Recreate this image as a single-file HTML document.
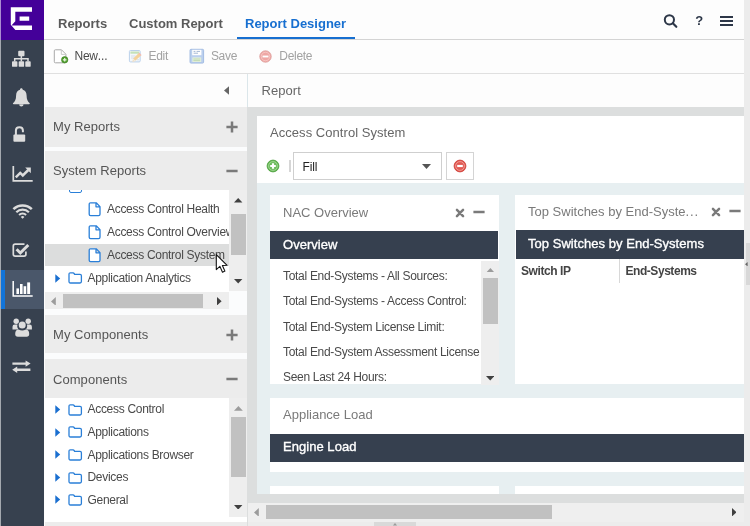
<!DOCTYPE html>
<html><head><meta charset="utf-8"><title>Report Designer</title>
<style>
html,body{margin:0;padding:0;}
body{width:750px;height:526px;position:relative;overflow:hidden;background:#fdfdfd;font-family:"Liberation Sans",sans-serif;font-size:12px;color:#444;}
div,span,svg{position:absolute;box-sizing:border-box;}
.t{white-space:nowrap;line-height:20px;height:20px;}
.h13{font-size:13px;color:#555;letter-spacing:0.05px;}
.tab{font-size:13px;font-weight:bold;color:#5a5a5a;}
.s12{font-size:12px;letter-spacing:-0.3px;color:#4a4a4a;}
.dis{color:#a2a2a2;}
.hdr{left:45px;width:202.4px;background:#ececec;}
.dark{background:#36404f;}
.wh{font-size:13px;color:#fff;-webkit-text-stroke:0.35px #fff;letter-spacing:0.04px;}
.wt{font-size:13px;color:#7a7a7a;}
.sbt{background:#eeeeee;}
.sbh{background:#c1c1c1;}
</style></head><body>
<div id="root" style="left:0;top:0;width:750px;height:526px;will-change:transform;">

<div style="left:0;top:0;width:44px;height:526px;background:#37414f;"></div>
<div style="left:0;top:0;width:44px;height:39.6px;background:#440099;"></div>
<div style="left:1px;top:269.6px;width:43px;height:39.3px;background:#4a576a;border-left:4px solid #1274d8;"></div>
<div style="left:44px;top:39px;width:700px;height:1px;background:#d4d4d4;"></div>
<div class="t tab" style="left:58px;top:14px;">Reports</div>
<div class="t tab" style="left:129px;top:14px;">Custom Report</div>
<div class="t tab" style="left:245px;top:14px;color:#176fd0;">Report Designer</div>
<div style="left:237.3px;top:36.8px;width:117.7px;height:2.4px;background:#176fd0;"></div>
<div style="left:44px;top:72.6px;width:700px;height:1px;background:#e0e0e0;"></div>
<div class="t s12" style="left:74.6px;top:46px;">New<i style="font-style:normal;letter-spacing:0px;">...</i></div>
<div class="t s12 dis" style="left:148.5px;top:46px;">Edit</div>
<div class="t s12 dis" style="left:210.9px;top:46px;">Save</div>
<div class="t s12 dis" style="left:279.3px;top:46px;">Delete</div>
<div style="left:45px;top:107px;width:202px;height:419px;background:#fbfcfd;"></div>
<div class="hdr" style="top:107px;height:40px;"></div>
<div class="t h13" style="left:53px;top:117px;">My Reports</div>
<div class="hdr" style="top:151.3px;height:38.7px;"></div>
<div class="t h13" style="left:53px;top:161px;">System Reports</div>
<div class="hdr" style="top:315px;height:38px;"></div>
<div class="t h13" style="left:53px;top:325px;">My Components</div>
<div class="hdr" style="top:359px;height:39px;"></div>
<div class="t h13" style="left:53px;top:370px;">Components</div>
<svg style="left:225.2px;top:120px;" width="14" height="14" viewBox="-7 -7 14 14"><path d="M-5.6 0 H5.6 M0 -5.6 V5.6" stroke="#7a7a7a" stroke-width="2.5"/></svg>
<svg style="left:225.2px;top:163.8px;" width="14" height="14" viewBox="-7 -7 14 14"><path d="M-5.6 0 H5.6" stroke="#7a7a7a" stroke-width="2.5"/></svg>
<svg style="left:225.2px;top:327.6px;" width="14" height="14" viewBox="-7 -7 14 14"><path d="M-5.6 0 H5.6 M0 -5.6 V5.6" stroke="#7a7a7a" stroke-width="2.5"/></svg>
<svg style="left:225.2px;top:371.8px;" width="14" height="14" viewBox="-7 -7 14 14"><path d="M-5.6 0 H5.6" stroke="#7a7a7a" stroke-width="2.5"/></svg>
<svg style="left:224.20000000000002px;top:86.1px;" width="5.2" height="9" viewBox="0 0 5.2 9"><path d="M5.2 0 L0 4.5 L5.2 9 Z" fill="#666"/></svg>
<div style="left:45px;top:190px;width:184.3px;height:102.3px;overflow:hidden;background:#fff;">
<div style="left:23.700000000000003px;top:-8.6px;width:13.4px;height:11.3px;border:1.4px solid #2a7fd8;border-radius:2px;"></div>
<div style="left:0;top:53.599999999999994px;width:184.3px;height:22.8px;background:#dcdddd;"></div>
<svg style="left:43.0px;top:12.200000000000017px;" width="14" height="15" viewBox="0 0 14 15"><path d="M1.2 2.2 Q1.2 0.8 2.6 0.8 L8.2 0.8 L12 4.6 L12 12.2 Q12 13.6 10.6 13.6 L2.6 13.6 Q1.2 13.6 1.2 12.2 Z M8 0.9 L8 4.8 L11.9 4.8" fill="#fff" stroke="#2a7fd8" stroke-width="1.3" stroke-linejoin="round"/></svg>
<div class="t s12" style="left:62px;top:9.200000000000012px;">Access Control Health</div>
<svg style="left:43.0px;top:35.30000000000001px;" width="14" height="15" viewBox="0 0 14 15"><path d="M1.2 2.2 Q1.2 0.8 2.6 0.8 L8.2 0.8 L12 4.6 L12 12.2 Q12 13.6 10.6 13.6 L2.6 13.6 Q1.2 13.6 1.2 12.2 Z M8 0.9 L8 4.8 L11.9 4.8" fill="#fff" stroke="#2a7fd8" stroke-width="1.3" stroke-linejoin="round"/></svg>
<div class="t s12" style="left:62px;top:32.300000000000004px;">Access Control Overview</div>
<svg style="left:43.0px;top:57.900000000000006px;" width="14" height="15" viewBox="0 0 14 15"><path d="M1.2 2.2 Q1.2 0.8 2.6 0.8 L8.2 0.8 L12 4.6 L12 12.2 Q12 13.6 10.6 13.6 L2.6 13.6 Q1.2 13.6 1.2 12.2 Z M8 0.9 L8 4.8 L11.9 4.8" fill="#fff" stroke="#2a7fd8" stroke-width="1.3" stroke-linejoin="round"/></svg>
<div class="t s12" style="left:62px;top:54.9px;">Access Control System</div>
<svg style="left:9.799999999999997px;top:83.69999999999999px;" width="6" height="9" viewBox="0 0 6 9"><path d="M0.3 0.2 L5.2 4.5 L0.3 8.8 Z" fill="#1a6fd0"/></svg>
<svg style="left:23.0px;top:82.10000000000002px;" width="15" height="12" viewBox="0 0 15 12"><path d="M1 2.2 Q1 0.8 2.4 0.8 L5 0.8 Q5.8 0.8 6.2 1.6 L6.6 2.4 L12 2.4 Q13.4 2.4 13.4 3.8 L13.4 9.6 Q13.4 11 12 11 L2.4 11 Q1 11 1 9.6 Z" fill="#fff" stroke="#2a7fd8" stroke-width="1.3" stroke-linejoin="round"/></svg>
<div class="t s12" style="left:42.5px;top:78.2px;">Application Analytics</div>
</div>
<div class="sbt" style="left:229.3px;top:190px;width:17.7px;height:101px;"></div>
<div class="sbh" style="left:231.2px;top:214px;width:14.6px;height:40.7px;"></div>
<svg style="left:234.20000000000002px;top:198.29999999999998px;" width="8.4" height="4.6" viewBox="0 0 8.4 4.6"><path d="M0 4.6 L4.2 0 L8.4 4.6 Z" fill="#404040"/></svg>
<svg style="left:234.20000000000002px;top:279.3px;" width="8.4" height="4.6" viewBox="0 0 8.4 4.6"><path d="M0 0 L4.2 4.6 L8.4 0 Z" fill="#404040"/></svg>
<div class="sbt" style="left:45px;top:292.2px;width:184.3px;height:17.1px;"></div>
<div class="sbh" style="left:62.5px;top:294.1px;width:140.5px;height:13.6px;"></div>
<svg style="left:50.9px;top:296.5px;" width="4.8" height="8.8" viewBox="0 0 4.8 8.8"><path d="M4.8 0 L0 4.4 L4.8 8.8 Z" fill="#9c9c9c"/></svg>
<svg style="left:217.29999999999998px;top:296.7px;" width="4.6" height="8.4" viewBox="0 0 4.6 8.4"><path d="M0 0 L4.6 4.2 L0 8.4 Z" fill="#404040"/></svg>
<div style="left:45px;top:398px;width:202px;height:124px;background:#fff;"></div>
<div style="left:45px;top:398px;width:184.3px;height:124px;overflow:hidden;background:#fff;">
<svg style="left:9.799999999999997px;top:7.199999999999989px;" width="6" height="9" viewBox="0 0 6 9"><path d="M0.3 0.2 L5.2 4.5 L0.3 8.8 Z" fill="#1a6fd0"/></svg>
<svg style="left:23.0px;top:5.800000000000011px;" width="15" height="12" viewBox="0 0 15 12"><path d="M1 2.2 Q1 0.8 2.4 0.8 L5 0.8 Q5.8 0.8 6.2 1.6 L6.6 2.4 L12 2.4 Q13.4 2.4 13.4 3.8 L13.4 9.6 Q13.4 11 12 11 L2.4 11 Q1 11 1 9.6 Z" fill="#fff" stroke="#2a7fd8" stroke-width="1.3" stroke-linejoin="round"/></svg>
<div class="t s12" style="left:42.5px;top:1px;">Access Control</div>
<svg style="left:9.799999999999997px;top:29.80000000000001px;" width="6" height="9" viewBox="0 0 6 9"><path d="M0.3 0.2 L5.2 4.5 L0.3 8.8 Z" fill="#1a6fd0"/></svg>
<svg style="left:23.0px;top:28.400000000000034px;" width="15" height="12" viewBox="0 0 15 12"><path d="M1 2.2 Q1 0.8 2.4 0.8 L5 0.8 Q5.8 0.8 6.2 1.6 L6.6 2.4 L12 2.4 Q13.4 2.4 13.4 3.8 L13.4 9.6 Q13.4 11 12 11 L2.4 11 Q1 11 1 9.6 Z" fill="#fff" stroke="#2a7fd8" stroke-width="1.3" stroke-linejoin="round"/></svg>
<div class="t s12" style="left:42.5px;top:24px;">Applications</div>
<svg style="left:9.799999999999997px;top:52.39999999999998px;" width="6" height="9" viewBox="0 0 6 9"><path d="M0.3 0.2 L5.2 4.5 L0.3 8.8 Z" fill="#1a6fd0"/></svg>
<svg style="left:23.0px;top:51.0px;" width="15" height="12" viewBox="0 0 15 12"><path d="M1 2.2 Q1 0.8 2.4 0.8 L5 0.8 Q5.8 0.8 6.2 1.6 L6.6 2.4 L12 2.4 Q13.4 2.4 13.4 3.8 L13.4 9.6 Q13.4 11 12 11 L2.4 11 Q1 11 1 9.6 Z" fill="#fff" stroke="#2a7fd8" stroke-width="1.3" stroke-linejoin="round"/></svg>
<div class="t s12" style="left:42.5px;top:47px;">Applications Browser</div>
<svg style="left:9.799999999999997px;top:74.89999999999998px;" width="6" height="9" viewBox="0 0 6 9"><path d="M0.3 0.2 L5.2 4.5 L0.3 8.8 Z" fill="#1a6fd0"/></svg>
<svg style="left:23.0px;top:73.5px;" width="15" height="12" viewBox="0 0 15 12"><path d="M1 2.2 Q1 0.8 2.4 0.8 L5 0.8 Q5.8 0.8 6.2 1.6 L6.6 2.4 L12 2.4 Q13.4 2.4 13.4 3.8 L13.4 9.6 Q13.4 11 12 11 L2.4 11 Q1 11 1 9.6 Z" fill="#fff" stroke="#2a7fd8" stroke-width="1.3" stroke-linejoin="round"/></svg>
<div class="t s12" style="left:42.5px;top:69px;">Devices</div>
<svg style="left:9.799999999999997px;top:97.39999999999998px;" width="6" height="9" viewBox="0 0 6 9"><path d="M0.3 0.2 L5.2 4.5 L0.3 8.8 Z" fill="#1a6fd0"/></svg>
<svg style="left:23.0px;top:96.0px;" width="15" height="12" viewBox="0 0 15 12"><path d="M1 2.2 Q1 0.8 2.4 0.8 L5 0.8 Q5.8 0.8 6.2 1.6 L6.6 2.4 L12 2.4 Q13.4 2.4 13.4 3.8 L13.4 9.6 Q13.4 11 12 11 L2.4 11 Q1 11 1 9.6 Z" fill="#fff" stroke="#2a7fd8" stroke-width="1.3" stroke-linejoin="round"/></svg>
<div class="t s12" style="left:42.5px;top:92px;">General</div>
</div>
<div class="sbt" style="left:229.3px;top:398px;width:17.7px;height:118.6px;"></div>
<div class="sbh" style="left:231.2px;top:417px;width:14.6px;height:60.2px;"></div>
<svg style="left:234.0px;top:406.3px;" width="8.8" height="4.8" viewBox="0 0 8.8 4.8"><path d="M0 4.8 L4.4 0 L8.8 4.8 Z" fill="#9c9c9c"/></svg>
<svg style="left:234.20000000000002px;top:504.5px;" width="8.4" height="4.6" viewBox="0 0 8.4 4.6"><path d="M0 0 L4.2 4.6 L8.4 0 Z" fill="#404040"/></svg>
<div style="left:45px;top:522px;width:202px;height:4px;background:#ececec;"></div>
<div style="left:247px;top:74px;width:1px;height:33px;background:#dbe6ea;"></div>
<div class="t h13" style="left:261.5px;top:80.5px;color:#666;">Report</div>
<div style="left:247.4px;top:107.2px;width:496.6px;height:418.8px;background:#dcdede;"></div>
<div style="left:257px;top:115.6px;width:487px;height:378.6px;background:#e7eff1;"></div>
<div style="left:257px;top:115.6px;width:487px;height:67px;background:#fff;"></div>
<div class="t h13" style="left:270px;top:123px;color:#666;">Access Control System</div>
<svg style="left:266px;top:159px;" width="14" height="14" viewBox="0 0 14 14"><circle cx="7" cy="7" r="5.9" fill="#6dbb5c" stroke="#4fa23f" stroke-width="0.9"/><circle cx="7" cy="7" r="4.4" fill="none" stroke="#a6d99a" stroke-width="0.8"/><path d="M7 4.2 V9.8 M4.2 7 H9.8" stroke="#fff" stroke-width="2.2"/></svg>
<div style="left:289px;top:160px;width:1.6px;height:12px;background:#d6d6d6;"></div>
<div style="left:292.5px;top:152px;width:149px;height:27.5px;background:#fff;border:1px solid #cfcfcf;"></div>
<div class="t" style="left:302.6px;top:156.5px;font-size:12px;color:#222;letter-spacing:-0.2px;">Fill</div>
<svg style="left:422.3px;top:164.2px;" width="9" height="5" viewBox="0 0 9 5"><path d="M0 0 L4.5 5 L9 0 Z" fill="#555"/></svg>
<div style="left:446px;top:152px;width:28.2px;height:27.5px;background:#fff;border:1px solid #d4d4d4;"></div>
<svg style="left:453px;top:159.3px;" width="14" height="14" viewBox="0 0 14 14"><circle cx="7" cy="7" r="5.9" fill="#e25b54" stroke="#cf4039" stroke-width="0.9"/><circle cx="7" cy="7" r="4.4" fill="none" stroke="#f2a6a1" stroke-width="0.8"/><path d="M4.2 7 H9.8" stroke="#fff" stroke-width="2.2"/></svg>
<div style="left:269.5px;top:195.3px;width:229px;height:189.2px;background:#fff;"></div>
<div class="t wt" style="left:283px;top:202.5px;">NAC Overview</div>
<svg style="left:454.2px;top:207.1px;" width="12" height="12" viewBox="-6 -6 12 12"><path d="M-3.05 -3.05 L3.05 3.05 M3.05 -3.05 L-3.05 3.05" stroke="#7a7a7a" stroke-width="2.5" stroke-linecap="round"/></svg>
<svg style="left:472.2px;top:205.2px;" width="14" height="14" viewBox="-7 -7 14 14"><path d="M-5.6 0 H5.6" stroke="#7a7a7a" stroke-width="2.5"/></svg>
<div class="dark" style="left:270.2px;top:230.8px;width:228px;height:28.2px;"></div>
<div class="t wh" style="left:283px;top:234.5px;">Overview</div>
<div style="left:269.5px;top:260px;width:211.5px;height:124.5px;overflow:hidden;">
<div class="t s12" style="left:13.5px;top:5.600000000000023px;">Total End-Systems - All Sources:</div>
<div class="t s12" style="left:13.5px;top:30.80000000000001px;">Total End-Systems - Access Control:</div>
<div class="t s12" style="left:13.5px;top:56.60000000000002px;">Total End-System License Limit:</div>
<div class="t s12" style="left:13.5px;top:81.89999999999998px;">Total End-System Assessment License</div>
<div class="t s12" style="left:13.5px;top:106.60000000000002px;">Seen Last 24 Hours:</div>
</div>
<div class="sbt" style="left:481px;top:261px;width:17.5px;height:123.5px;"></div>
<div class="sbh" style="left:483px;top:278px;width:14.5px;height:46px;"></div>
<svg style="left:485.6px;top:267.6px;" width="8.8" height="4.8" viewBox="0 0 8.8 4.8"><path d="M0 4.8 L4.4 0 L8.8 4.8 Z" fill="#9c9c9c"/></svg>
<svg style="left:485.8px;top:376.2px;" width="8.4" height="4.6" viewBox="0 0 8.4 4.6"><path d="M0 0 L4.2 4.6 L8.4 0 Z" fill="#404040"/></svg>
<div style="left:514.8px;top:194.8px;width:229.2px;height:189px;background:#fff;"></div>
<div class="t wt" style="left:528px;top:202px;">Top Switches by End-Syste<i style="font-style:normal;letter-spacing:0.9px;">...</i></div>
<svg style="left:709.6px;top:206.1px;" width="12" height="12" viewBox="-6 -6 12 12"><path d="M-3.05 -3.05 L3.05 3.05 M3.05 -3.05 L-3.05 3.05" stroke="#7a7a7a" stroke-width="2.5" stroke-linecap="round"/></svg>
<svg style="left:727.7px;top:204px;" width="14" height="14" viewBox="-7 -7 14 14"><path d="M-5.6 0 H5.6" stroke="#7a7a7a" stroke-width="2.5"/></svg>
<div class="dark" style="left:515.8px;top:230px;width:228.2px;height:28.7px;"></div>
<div class="t wh" style="left:528px;top:234px;">Top Switches by End-Systems</div>
<div class="t" style="left:521px;top:261px;font-size:12px;font-weight:bold;letter-spacing:-0.42px;color:#444;">Switch IP</div>
<div style="left:619px;top:259px;width:1px;height:23.5px;background:#d8d8d8;"></div>
<div class="t" style="left:625.5px;top:261px;font-size:12px;font-weight:bold;letter-spacing:-0.45px;color:#444;">End-Systems</div>
<div style="left:269.5px;top:398px;width:474.5px;height:73.5px;background:#fff;"></div>
<div class="t wt" style="left:283px;top:404.5px;">Appliance Load</div>
<div class="dark" style="left:270.2px;top:433.5px;width:473.8px;height:28.4px;"></div>
<div class="t wh" style="left:283px;top:437px;">Engine Load</div>
<div style="left:269.5px;top:485.7px;width:229px;height:8.5px;background:#fff;"></div>
<div style="left:514.8px;top:485.7px;width:229.2px;height:8.5px;background:#fff;"></div>
<div style="left:247.6px;top:503px;width:496.4px;height:18.5px;background:#efefef;"></div>
<div class="sbh" style="left:266px;top:505.3px;width:285.5px;height:13.8px;"></div>
<svg style="left:254.4px;top:507.6px;" width="4.8" height="8.8" viewBox="0 0 4.8 8.8"><path d="M4.8 0 L0 4.4 L4.8 8.8 Z" fill="#9c9c9c"/></svg>
<svg style="left:731.5px;top:507.8px;" width="4.6" height="8.4" viewBox="0 0 4.6 8.4"><path d="M0 0 L4.6 4.2 L0 8.4 Z" fill="#404040"/></svg>
<div style="left:247.6px;top:521.5px;width:496.4px;height:4.5px;background:#ececec;"></div>
<div style="left:373.5px;top:522.3px;width:42px;height:4px;background:#d9d9d9;"></div>
<svg style="left:392.5px;top:523.45px;" width="4" height="2.5" viewBox="0 0 4 2.5"><path d="M0 2.5 L2.0 0 L4 2.5 Z" fill="#999"/></svg>
<div style="left:743.6px;top:0;width:6.4px;height:526px;background:#ececec;"></div>
<div style="left:745.6px;top:242.5px;width:4.4px;height:42px;background:#d8d8d8;"></div>
<svg style="left:745.3000000000001px;top:261.8px;" width="2.6" height="4.4" viewBox="0 0 2.6 4.4"><path d="M2.6 0 L0 2.2 L2.6 4.4 Z" fill="#666"/></svg>
<svg style="left:0;top:0;" width="44" height="40" viewBox="0 0 44 40"><path d="M10.8 7.2 H32 V11.7 H15.3 V21.3 L11.9 25.1 L12.3 25.6 H32 V30 H15.4 L10.8 24.7 Z M19.6 16.4 H29.2 V20.8 H19.6 Z" fill="#fff"/></svg>
<svg style="left:0;top:40px;" width="44" height="40" viewBox="0 40 44 40"><g fill="#dcdcdc"><rect x="18.2" y="50.8" width="6.3" height="5.4" rx="0.9"/><rect x="12" y="61.2" width="5.4" height="5.6" rx="0.9"/><rect x="18.7" y="61.2" width="5.4" height="5.6" rx="0.9"/><rect x="25.3" y="61.2" width="5.4" height="5.6" rx="0.9"/></g><path d="M21.35 56 V61.5 M14.7 61.5 V58.7 H28 V61.5" fill="none" stroke="#dcdcdc" stroke-width="1.5"/></svg>
<svg style="left:0;top:84px;" width="44" height="26" viewBox="0 84 44 26"><path d="M21.35 88.3 C22.2 88.3 22.7 88.9 22.7 89.7 C25.3 90.4 26.6 92.6 26.6 95.4 C26.6 99.6 27.8 101.6 29.8 103.2 C29.8 103.9 29.3 104.3 28.7 104.3 H14 C13.4 104.3 12.9 103.9 12.9 103.2 C14.9 101.6 16.1 99.6 16.1 95.4 C16.1 92.6 17.4 90.4 20 89.7 C20 88.9 20.5 88.3 21.35 88.3 Z M19.2 104.6 H23.5 C23.5 105.8 22.5 106.5 21.35 106.5 C20.2 106.5 19.2 105.8 19.2 104.6 Z" fill="#dcdcdc"/></svg>
<svg style="left:0;top:122px;" width="44" height="24" viewBox="0 122 44 24"><rect x="13.4" y="134.6" width="11.8" height="7.2" rx="1" fill="#dcdcdc"/><path d="M15.9 135 V130.6 C15.9 128.1 17.4 127.2 19.4 127.2 C21.4 127.2 22.9 128.1 22.9 130.6 V132.2" fill="none" stroke="#dcdcdc" stroke-width="2"/></svg>
<svg style="left:0;top:160px;" width="44" height="26" viewBox="0 160 44 26"><path d="M13.3 166 V180.8 H32.7" fill="none" stroke="#dcdcdc" stroke-width="1.7"/><path d="M15.8 177.3 L20.2 172.9 L22.8 175.5 L28.3 170" fill="none" stroke="#dcdcdc" stroke-width="2.5"/><path d="M25.2 167.6 H30.8 V173.2 Z" fill="#dcdcdc"/></svg>
<svg style="left:0;top:198px;" width="44" height="26" viewBox="0 198 44 26"><g fill="none" stroke="#dcdcdc" stroke-linecap="butt"><path d="M13.4 209.2 A13 13 0 0 1 31.8 209.2" stroke-width="2.5"/><path d="M16.3 212.2 A8.9 8.9 0 0 1 28.9 212.2" stroke-width="2.2"/><path d="M19.1 215 A4.9 4.9 0 0 1 26.1 215" stroke-width="2"/></g><path d="M22.6 218.8 L20.8 216.9 A2.6 2.6 0 0 1 24.4 216.9 Z" fill="#dcdcdc"/></svg>
<svg style="left:0;top:236px;" width="44" height="26" viewBox="0 236 44 26"><path d="M24.5 244.1 H15.2 Q13.3 244.1 13.3 246 V254.3 Q13.3 256.2 15.2 256.2 H24 Q25.9 256.2 25.9 254.3 V251.5" fill="none" stroke="#dcdcdc" stroke-width="1.7"/><path d="M16.6 249.3 L20.3 253 L28.3 245" fill="none" stroke="#dcdcdc" stroke-width="3"/></svg>
<svg style="left:0;top:276px;" width="44" height="26" viewBox="0 276 44 26"><path d="M13.2 281 V295.9 H32.7" fill="none" stroke="#fff" stroke-width="1.5"/><g fill="#fff"><rect x="16.4" y="288.4" width="2.6" height="5.6"/><rect x="20" y="284" width="2.6" height="10"/><rect x="23.6" y="286.2" width="2.6" height="7.8"/><rect x="27.2" y="282.4" width="2.9" height="11.6"/></g></svg>
<svg style="left:0;top:314px;" width="44" height="26" viewBox="0 314 44 26"><g fill="#dcdcdc"><circle cx="16.2" cy="321.2" r="2.7"/><circle cx="28.2" cy="321.2" r="2.7"/><path d="M12.5 329.5 V326.8 Q12.5 324.4 14.8 324.4 H17.4 Q16.6 327.5 18.3 329.5 Z"/><path d="M31.9 329.5 V326.8 Q31.9 324.4 29.6 324.4 H27 Q27.8 327.5 26.1 329.5 Z"/><circle cx="22.2" cy="325.1" r="3.5"/><path d="M15.2 334 Q15.2 329.4 18.6 329.4 Q22.2 331.4 25.8 329.4 Q29.2 329.4 29.2 334 Q29.2 336.7 26.6 336.7 H17.8 Q15.2 336.7 15.2 334 Z"/></g></svg>
<svg style="left:0;top:354px;" width="44" height="24" viewBox="0 354 44 24"><g fill="#dcdcdc"><path d="M12.4 362.5 H25.6 V360.4 L30.6 363.6 L25.6 366.8 V364.8 H12.4 Z"/><path d="M30.4 368.6 H17.2 V366.5 L12.2 369.7 L17.2 372.9 V370.9 H30.4 Z"/></g></svg>
<div style="left:0;top:0;width:1.1px;height:526px;background:rgba(255,255,255,0.55);"></div>
<svg style="left:660px;top:10px;" width="22" height="22" viewBox="660 10 22 22"><circle cx="669.4" cy="19.8" r="4.6" fill="none" stroke="#2d3748" stroke-width="2"/><path d="M672.8 23.3 L676.3 26.8" stroke="#2d3748" stroke-width="2.2" stroke-linecap="round"/></svg>
<div class="t" style="left:695.2px;top:11.2px;font-size:13px;font-weight:bold;color:#2d3748;">?</div>
<div style="left:720.4px;top:15.7px;width:12.6px;height:2px;background:#2d3748;"></div>
<div style="left:720.4px;top:19.7px;width:12.6px;height:2px;background:#2d3748;"></div>
<div style="left:720.4px;top:23.7px;width:12.6px;height:2px;background:#2d3748;"></div>
<svg style="left:52px;top:47px;" width="18" height="19" viewBox="52 47 18 19"><path d="M54.3 50.8 Q54.3 49.8 55.3 49.8 H61.5 L65.9 54.2 V61.8 Q65.9 62.8 64.9 62.8 H55.3 Q54.3 62.8 54.3 61.8 Z" fill="#fff" stroke="#a9a9a9" stroke-width="1"/><path d="M61.3 50 V54.4 H65.7" fill="none" stroke="#c4c4c4" stroke-width="0.9"/><circle cx="64.7" cy="59.8" r="3.2" fill="#4f9d2d" stroke="#3c7d20" stroke-width="0.6"/><path d="M64.7 58 V61.6 M62.9 59.8 H66.5" stroke="#e7f5df" stroke-width="1.2"/></svg>
<svg style="left:128px;top:49px;opacity:0.6;" width="15" height="15" viewBox="128 49 15 15"><rect x="129.4" y="50.5" width="10.8" height="11.4" rx="1" fill="#eef4fb" stroke="#8fb3de" stroke-width="1"/><rect x="130.4" y="51.5" width="8.8" height="2.2" fill="#9fcf8a"/><path d="M131 56 H135.5 M131 58 H134 M136.5 59.8 H139" stroke="#aebfd4" stroke-width="0.8"/><path d="M134.2 59.6 L140.2 54" stroke="#efb65a" stroke-width="3.1"/><path d="M139.4 52.7 L141.6 55 L140.8 55.8 L138.5 53.5 Z" fill="#e88f8f"/><path d="M132.2 61.9 L132.9 58.9 L135.3 61.2 Z" fill="#e9cfa6"/></svg>
<svg style="left:189px;top:48px;opacity:0.55;" width="16" height="16" viewBox="189 48 16 16"><rect x="190" y="49.3" width="13.6" height="13.8" rx="1" fill="#86abe2" stroke="#4f7fc8" stroke-width="0.9"/><rect x="192.2" y="49.8" width="9.2" height="5.4" fill="#fff"/><path d="M193.6 51.4 H195.4 M196.6 51.4 H200 M193.6 53.2 H198" stroke="#4a6fa8" stroke-width="0.9"/><rect x="192.4" y="57.4" width="8.8" height="4.6" fill="#cfe6c0"/><path d="M193.4 59 H200.2 M193.4 60.6 H200.2" stroke="#7db267" stroke-width="0.8"/></svg>
<svg style="left:258.7px;top:49.5px;opacity:0.5;" width="13" height="13" viewBox="0 0 14 14"><circle cx="7" cy="7" r="6.2" fill="#e0524c" stroke="#b93a35" stroke-width="0.8"/><circle cx="7" cy="7" r="4.6" fill="none" stroke="#f3a19d" stroke-width="0.8"/><path d="M3.8 7 H10.2" stroke="#fff" stroke-width="2"/></svg>
<svg style="left:214px;top:252.2px;" width="16" height="22" viewBox="0 0 16 22"><path d="M2.3 2.6 V17.6 L5.9 14.4 L8.5 20.2 L10.9 19.1 L8.4 13.5 L13.1 13.3 Z" fill="#fff" stroke="#111" stroke-width="1.1" stroke-linejoin="round"/></svg>
</div>
</body></html>
